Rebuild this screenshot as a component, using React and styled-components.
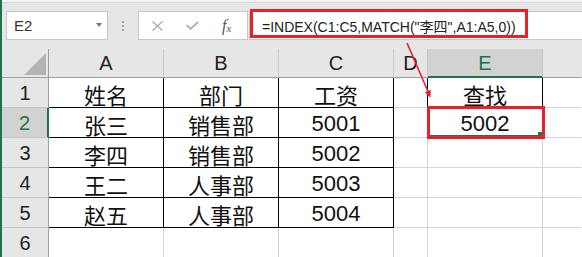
import styled, { createGlobalStyle } from "styled-components";

// 엑셀 화면: 수식 입력줄 + 시트 격자 + 빨간 주석
const GREEN = "#217346";
const GRID = "#d4d4d4";
const BLACK = "#000";
const RED = "#e8202a";

const COLUMNS = ["A", "B", "C", "D", "E", ""];
const SELECTED_COL = 4;
const SELECTED_ROW = 1;

const ROWS = [
  ["姓名", "部门", "工资", "", "查找", ""],
  ["张三", "销售部", "5001", "", "5002", ""],
  ["李四", "销售部", "5002", "", "", ""],
  ["王二", "人事部", "5003", "", "", ""],
  ["赵五", "人事部", "5004", "", "", ""],
  ["", "", "", "", "", ""],
];

// 셀 테두리 색 (표 A1:C5, E1:E2 는 검은 테두리)
function rightColor(r, c) {
  if (c === 5) return "transparent";
  if (c <= 2 && r <= 4) return BLACK;
  if ((c === 3 || c === 4) && r <= 1) return BLACK;
  return GRID;
}

function bottomColor(r, c) {
  if (c <= 2 && r <= 4) return BLACK;
  if (c === 4 && r <= 1) return BLACK;
  return GRID;
}

function App() {
  return (
    <>
      <GlobalStyle />
      <Window>
        <TopStrip />
        <FormulaRow>
          <NameBox>
            E2
            <DropArrow />
          </NameBox>
          <Dots>
            <i />
            <i />
            <i />
          </Dots>
          <FxBox>
            <svg width="11" height="10" viewBox="0 0 11 10">
              <path d="M0.5 0.5 L10.5 9.5 M10.5 0.5 L0.5 9.5" stroke="#a8a8a8" strokeWidth="1.2" fill="none" />
            </svg>
            <svg width="13" height="9" viewBox="0 0 13 9">
              <path d="M0.8 4.2 L4.6 7.8 L12.2 0.8" stroke="#a8a8a8" strokeWidth="1.6" fill="none" />
            </svg>
            <FxLabel>
              f<sub>x</sub>
            </FxLabel>
          </FxBox>
          <FormulaInput>=INDEX(C1:C5,MATCH("李四",A1:A5,0))</FormulaInput>
        </FormulaRow>

        <Sheet>
          <Corner>
            <svg width="22" height="22" viewBox="0 0 22 22">
              <polygon points="22,0 22,22 0,22" fill="#b4b4b4" />
            </svg>
          </Corner>
          {COLUMNS.map((col, c) => (
            <ColHeader key={"h" + c} $selected={c === SELECTED_COL} $last={c === 5}>
              {col}
            </ColHeader>
          ))}

          {ROWS.map((row, r) => [
            <RowHeader key={"r" + r} $selected={r === SELECTED_ROW}>
              {r + 1}
            </RowHeader>,
            ...row.map((text, c) => (
              <Cell key={r + "-" + c} $right={rightColor(r, c)} $bottom={bottomColor(r, c)}>
                {text}
              </Cell>
            )),
          ])}
        </Sheet>

        {/* 빨간 주석: 수식 박스, 결과 셀, 화살표 */}
        <FormulaCallout />
        <CellCallout />
        <ArrowLayer width="582" height="257" viewBox="0 0 582 257">
          <line x1="407" y1="43" x2="428" y2="91.5" stroke={RED} strokeWidth="1.6" />
          <polygon points="424.8,92.3 430.5,97.8 430.8,89.8" fill={RED} />
        </ArrowLayer>
      </Window>
    </>
  );
}

export default App;

const GlobalStyle = createGlobalStyle`
  html, body {
    margin: 0;
    padding: 0;
    background: #e6e6e6;
  }
  body {
    font-family: "Liberation Sans", "Noto Sans CJK SC", sans-serif;
  }
`;

const Window = styled.div`
  position: relative;
  width: 582px;
  height: 257px;
  box-sizing: border-box;
  border-left: 2px solid ${GREEN};
  background: #e6e6e6;
  overflow: hidden;
`;

const TopStrip = styled.div`
  height: 2px;
  background: #f3f3f3;
  border-bottom: 1px solid #d6d6d6;
`;

const FormulaRow = styled.div`
  display: flex;
  align-items: stretch;
  height: 29px;
  margin-top: 8px;
  padding-left: 4px;
`;

const NameBox = styled.div`
  position: relative;
  box-sizing: border-box;
  width: 102px;
  display: flex;
  align-items: center;
  padding-left: 7px;
  background: #fff;
  border: 1px solid #c6c6c6;
  font-size: 15px;
  color: #333;
`;

const DropArrow = styled.span`
  position: absolute;
  right: 5px;
  top: 11px;
  width: 0;
  height: 0;
  border-left: 3px solid transparent;
  border-right: 3px solid transparent;
  border-top: 4px solid #777;
`;

const Dots = styled.div`
  width: 30px;
  display: flex;
  flex-direction: column;
  align-items: center;
  justify-content: center;
  gap: 2px;

  i {
    display: block;
    width: 2px;
    height: 2px;
    background: #a0a0a0;
  }
`;

const FxBox = styled.div`
  box-sizing: border-box;
  width: 110px;
  display: flex;
  align-items: center;
  gap: 23px;
  padding-left: 13px;
  background: #fff;
  border: 1px solid #c6c6c6;
`;

const FxLabel = styled.span`
  font-family: "Liberation Serif", serif;
  font-style: italic;
  font-size: 16px;
  color: #555;
  line-height: 1;

  sub {
    font-size: 11px;
    vertical-align: baseline;
    position: relative;
    top: 1px;
  }
`;

const FormulaInput = styled.div`
  flex: 1;
  margin-left: 1px;
  display: flex;
  align-items: center;
  padding-left: 12px;
  background: #fff;
  border: 1px solid #c6c6c6;
  border-right: none;
  font-size: 14px;
  color: #222;
  white-space: nowrap;
`;

const Sheet = styled.div`
  display: grid;
  grid-template-columns: 47px 115px 115px 115px 34px 115px 1fr;
  grid-template-rows: 29px repeat(6, 30px);
  margin-top: 9px;
`;

const Corner = styled.div`
  box-sizing: border-box;
  display: flex;
  align-items: flex-end;
  justify-content: flex-end;
  padding: 0 2px 2px 0;
  border-right: 1px solid #9e9e9e;
  border-bottom: 1px solid #9e9e9e;
`;

const ColHeader = styled.div`
  box-sizing: border-box;
  display: flex;
  align-items: center;
  justify-content: center;
  font-size: 20px;
  color: ${(p) => (p.$selected ? GREEN : "#222")};
  background: ${(p) => (p.$selected ? "#d2d2d2" : "#e6e6e6")};
  border-right: 1px solid ${(p) => (p.$last ? "transparent" : "#c6c6c6")};
  border-bottom: ${(p) => (p.$selected ? `2px solid ${GREEN}` : "1px solid #9e9e9e")};
  padding-top: ${(p) => (p.$selected ? "1px" : "0")};
`;

const RowHeader = styled.div`
  box-sizing: border-box;
  display: flex;
  align-items: center;
  justify-content: center;
  padding-top: 2px;
  font-size: 20px;
  color: ${(p) => (p.$selected ? GREEN : "#222")};
  background: ${(p) => (p.$selected ? "#d2d2d2" : "#e6e6e6")};
  border-right: ${(p) => (p.$selected ? `2px solid ${GREEN}` : "1px solid #9e9e9e")};
  border-bottom: 1px solid #c6c6c6;
`;

const Cell = styled.div`
  box-sizing: border-box;
  display: flex;
  align-items: center;
  justify-content: center;
  padding-top: 3px;
  background: #fff;
  font-size: 22px;
  color: #111;
  white-space: nowrap;
  border-right: 1px solid ${(p) => p.$right};
  border-bottom: 1px solid ${(p) => p.$bottom};
`;

const FormulaCallout = styled.div`
  position: absolute;
  left: 248px;
  top: 9px;
  width: 278px;
  height: 29px;
  box-sizing: border-box;
  border: 3px solid ${RED};
`;

const CellCallout = styled.div`
  position: absolute;
  left: 425px;
  top: 106px;
  width: 118px;
  height: 33px;
  box-sizing: border-box;
  border: 3px solid ${RED};

  &::before {
    content: "";
    position: absolute;
    left: 0;
    right: 0;
    bottom: 0;
    height: 1px;
    background: ${GREEN};
  }

  &::after {
    content: "";
    position: absolute;
    right: 0;
    bottom: 0;
    width: 4px;
    height: 4px;
    background: ${GREEN};
  }
`;

const ArrowLayer = styled.svg`
  position: absolute;
  left: -2px;
  top: 0;
  pointer-events: none;
`;
